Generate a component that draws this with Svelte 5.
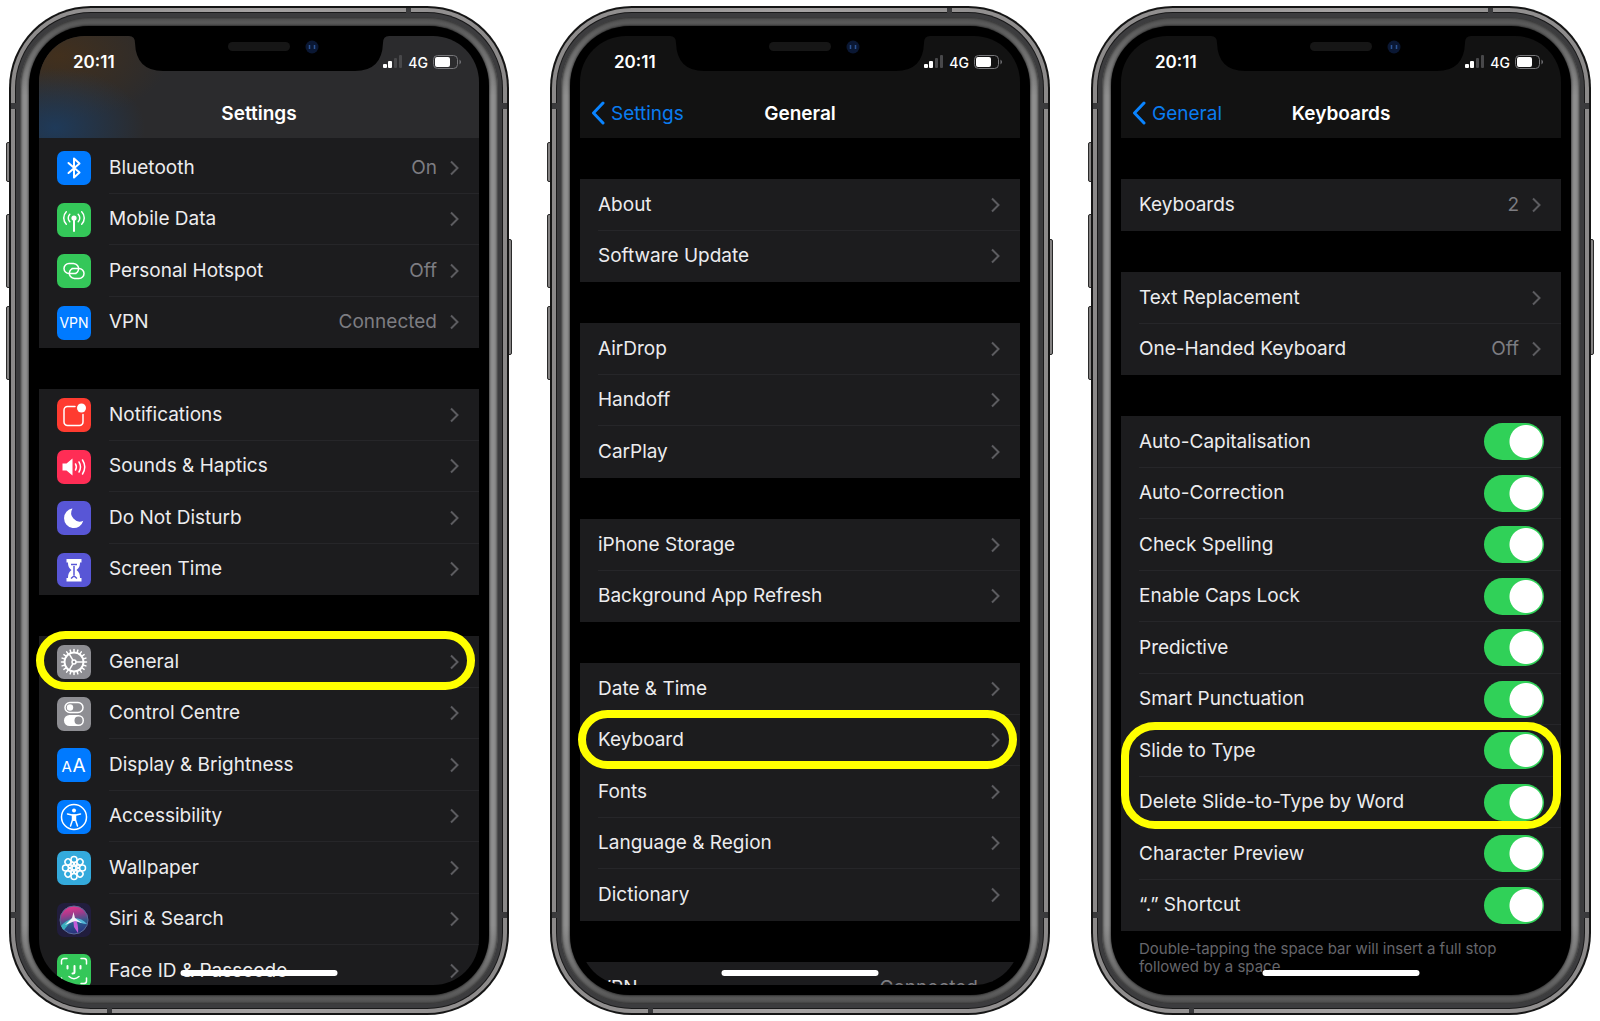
<script>
  const phones = [
    {
      title: 'Settings',
      back: '',
      tinted: true,
      groups: [
        {
          scrolled: true,
          rows: [
            { label: 'Bluetooth', icon: 'bluetooth', value: 'On' },
            { label: 'Mobile Data', icon: 'antenna' },
            { label: 'Personal Hotspot', icon: 'hotspot', value: 'Off' },
            { label: 'VPN', icon: 'vpn', value: 'Connected' },
          ],
        },
        {
          rows: [
            { label: 'Notifications', icon: 'notifications' },
            { label: 'Sounds & Haptics', icon: 'sounds' },
            { label: 'Do Not Disturb', icon: 'moon' },
            { label: 'Screen Time', icon: 'hourglass' },
          ],
        },
        {
          rows: [
            { label: 'General', icon: 'gear' },
            { label: 'Control Centre', icon: 'switches' },
            { label: 'Display & Brightness', icon: 'display' },
            { label: 'Accessibility', icon: 'accessibility' },
            { label: 'Wallpaper', icon: 'wallpaper' },
            { label: 'Siri & Search', icon: 'siri' },
            { label: 'Face ID & Passcode', icon: 'faceid' },
          ],
        },
      ],
      mark: 'mark-general',
    },
    {
      title: 'General',
      back: 'Settings',
      groups: [
        { rows: [{ label: 'About' }, { label: 'Software Update' }] },
        { rows: [{ label: 'AirDrop' }, { label: 'Handoff' }, { label: 'CarPlay' }] },
        { rows: [{ label: 'iPhone Storage' }, { label: 'Background App Refresh' }] },
        {
          rows: [
            { label: 'Date & Time' },
            { label: 'Keyboard' },
            { label: 'Fonts' },
            { label: 'Language & Region' },
            { label: 'Dictionary' },
          ],
        },
        { rows: [{ label: 'VPN', value: 'Connected' }] },
      ],
      mark: 'mark-keyboard',
    },
    {
      title: 'Keyboards',
      back: 'General',
      groups: [
        { rows: [{ label: 'Keyboards', value: '2' }] },
        { rows: [{ label: 'Text Replacement' }, { label: 'One-Handed Keyboard', value: 'Off' }] },
        {
          rows: [
            'Auto-Capitalisation',
            'Auto-Correction',
            'Check Spelling',
            'Enable Caps Lock',
            'Predictive',
            'Smart Punctuation',
            'Slide to Type',
            'Delete Slide-to-Type by Word',
            'Character Preview',
            '“.” Shortcut',
          ].map((label) => ({ label, toggle: true })),
          note: 'Double-tapping the space bar will insert a full stop followed by a space.',
        },
      ],
      mark: 'mark-slide',
    },
  ];

  const teeth = Array.from({ length: 20 }, (_, i) => i * 18);
  const petals = Array.from({ length: 8 }, (_, i) => i * 45);
</script>

{#snippet icon(name)}
  <svg class="icon {name}" viewBox="0 0 34 34" aria-hidden="true">
    {#if name === 'bluetooth'}
      <path class="line bold" d="M11.500 12l11 9.500-5.500 5V7.500l5.500 5-11 9.500" />
    {:else if name === 'antenna'}
      <circle class="solid" cx="17" cy="15" r="2.600" />
      <path class="line bold" d="M17 16v12" />
      <path class="line" d="M12.800 11.200a5.400 5.400 0 0 0 0 7.600M21.200 11.200a5.400 5.400 0 0 1 0 7.600M9.300 8.800a8.800 8.800 0 0 0 0 12.400M24.700 8.800a8.800 8.800 0 0 1 0 12.400" />
    {:else if name === 'hotspot'}
      <g class="line">
        <path d="M19 19.500h-7a5 5 0 0 1 0-10h4.500a5.500 5 0 0 1 5 6q-.5 3.500-4 4" />
        <path d="M15 14.500h7a5 5 0 0 1 0 10h-4.500a5.500 5 0 0 1-5-6q.5-3.500 4-4" />
      </g>
    {:else if name === 'vpn'}
      <text x="17" y="22" text-anchor="middle" font-size="14">VPN</text>
    {:else if name === 'notifications'}
      <path class="line" d="M18 8.500h-7.500a3.500 3.500 0 0 0-3.500 3.500v12a3.500 3.500 0 0 0 3.500 3.500h12a3.500 3.500 0 0 0 3.500-3.500v-7.500" />
      <circle class="solid" cx="24.500" cy="10" r="4.500" />
    {:else if name === 'sounds'}
      <path class="solid" d="M5.500 13.500h4l6-5v17l-6-5h-4z" />
      <path class="line" d="M18.500 14q1.800 3 0 6M22 12q3 5 0 10M25.500 10q4.500 7 0 14" />
    {:else if name === 'moon'}
      <path class="solid" d="M15.500 7.500a8.600 8.600 0 0 0 10.800 12.300 9.800 9.800 0 1 1-10.800-12.300z" />
    {:else if name === 'hourglass'}
      <path class="solid" d="M9.500 6h15v3.500h-1.500c0 4-1 5.500-3.500 7.500 2.500 2 3.500 4 3.500 8h1.500V28.500h-15V25h1.500c0-4 1-6 3.500-8-2.500-2-3.500-3.500-3.500-7.500h-1.500z" />
      <path class="cut" d="M14 11.500h6M17 13v9M14 25.500l3-2.500 3 2.500" />
    {:else if name === 'gear'}
      <g class="line">
        <circle class="ring" cx="17" cy="17" r="9.500" />
        {#each teeth as angle}
          <path d="M17 4.500v3" transform="rotate({angle} 17 17)" />
        {/each}
        <circle cx="17" cy="17" r="2" />
        <path d="M19 17h7.500M16 15.300l-3.800-6.500M16 18.700l-3.800 6.500" />
      </g>
    {:else if name === 'switches'}
      <rect class="line" x="8" y="5.500" width="18" height="10" rx="5" />
      <circle class="solid" cx="13" cy="10.500" r="3.200" />
      <rect class="solid" x="7" y="18" width="20" height="11" rx="5.500" />
      <circle class="hole" cx="21.500" cy="23.500" r="4" />
    {:else if name === 'display'}
      <text x="4.500" y="24" font-size="15">A</text>
      <text x="15.500" y="24" font-size="19">A</text>
    {:else if name === 'accessibility'}
      <circle class="line" cx="17" cy="17" r="12.500" />
      <circle class="solid" cx="17" cy="10.500" r="2" />
      <path class="line" d="M10.500 14l4.500 1h4l4.500-1M15.500 15v5l-2 6M18.500 15v5l2 6" />
      <path class="solid" d="M15 14.500h4v6.500h-4z" />
    {:else if name === 'wallpaper'}
      <g class="line">
        {#each petals as angle}
          <circle cx="17" cy="8.500" r="3" transform="rotate({angle} 17 17)" />
          <circle cx="17" cy="12.500" r="1.500" transform="rotate({angle + 22} 17 17)" />
        {/each}
        <circle cx="17" cy="17" r="2" />
      </g>
    {:else if name === 'siri'}
      <defs>
        <linearGradient id="siri-orb" x1="0.400" y1="0" x2="0.600" y2="1">
          <stop offset="0" stop-color="#e8348c" />
          <stop offset="0.300" stop-color="#9c3c8c" />
          <stop offset="0.600" stop-color="#2a5c8c" />
          <stop offset="1" stop-color="#2a2d7c" />
        </linearGradient>
      </defs>
      <circle cx="17" cy="17" r="14" fill="url(#siri-orb)" stroke="#5a6c98" />
      <path d="M16 15Q8 18 4 23q1 3 3 4 4-6 10-11z" fill="#3fc4cc" opacity="0.800" />
      <path d="M17 15q8 0 13 6-6 0-13-4z" fill="#54b8d8" />
      <path d="M16 15l1 9 4 6q1-8-3-15z" fill="#c45cd8" />
      <path d="M16.500 9l1.500 6 7 5-7-2-10 4 7-7z" fill="#fff" opacity="0.900" />
    {:else if name === 'faceid'}
      <path class="line" d="M4.500 10V7a2.500 2.500 0 0 1 2.500-2.500h3M24 4.500h3a2.500 2.500 0 0 1 2.500 2.500v3M4.500 24v3a2.500 2.500 0 0 0 2.500 2.500h3M24 29.500h3a2.500 2.500 0 0 0 2.500-2.500v-3M12 22.500q5 4.500 10 0" />
      <path class="line bold" d="M10.500 12v2.500M23.500 12v2.500M17.500 12v6q0 1.500-2 1.500" />
    {/if}
  </svg>
{/snippet}

{#snippet chevron()}
  <svg class="chevron" viewBox="0 0 9 16" aria-hidden="true"><path d="M1 1.500L7.500 8 1 14.500" /></svg>
{/snippet}

<main>
  {#each phones as phone, p}
    <section class="phone" aria-label={phone.title}>
      <span class="key silent"></span>
      <span class="key volume-up"></span>
      <span class="key volume-down"></span>
      <span class="key power"></span>
      <div class="layer edge">
        <div class="layer band">
          <div class="layer seam">
            <div class="layer rim">
              <div class="layer glass">
                <div class="screen">
                  <header class:tinted={phone.tinted}>
                    <div class="status">
                      <time>20:11</time>
                      <span class="network">
                        <svg class="bars" viewBox="0 0 20 14" aria-hidden="true">
                          <rect x="0" y="9" width="4" height="4" rx="1" />
                          <rect x="5" y="6" width="4" height="7" rx="1" />
                          <rect class="dim" x="11" y="3" width="3" height="10" rx="1" />
                          <rect class="dim" x="16" y="0" width="3" height="13" rx="1" />
                        </svg>
                        <span>4G</span>
                        <svg class="battery" viewBox="0 0 29 14" aria-hidden="true">
                          <rect class="shell" x="0.500" y="0.500" width="24" height="13" rx="4" />
                          <rect x="2" y="2" width="15" height="10" rx="2" />
                          <path class="tip" d="M26.500 4.500q3 2.500 0 5z" />
                        </svg>
                      </span>
                    </div>
                    <nav>
                      {#if phone.back}
                        <a class="back" href="#back">
                          <svg viewBox="0 0 14 24" aria-hidden="true"><path d="M12 2L2.500 12 12 22" /></svg>
                          {phone.back}
                        </a>
                      {/if}
                      <h1>{phone.title}</h1>
                    </nav>
                  </header>
                  <div class="list" class:flush={phone.tinted}>
                    {#each phone.groups as group, g}
                      <div class="group" class:scrolled={group.scrolled}>
                        {#each group.rows as row, r}
                          {#if row.toggle}
                            <label class="row" for="toggle-{p}-{g}-{r}">
                              <span class="body">
                                <span class="name">{row.label}</span>
                                <input id="toggle-{p}-{g}-{r}" type="checkbox" role="switch" checked />
                              </span>
                            </label>
                          {:else}
                            <a class="row" href="#open">
                              {#if row.icon}{@render icon(row.icon)}{/if}
                              <span class="body">
                                <span class="name">{row.label}</span>
                                {#if row.value}<span class="value">{row.value}</span>{/if}
                                {@render chevron()}
                              </span>
                            </a>
                          {/if}
                        {/each}
                      </div>
                      {#if group.note}<p class="note">{group.note}</p>{/if}
                    {/each}
                  </div>
                  <svg class="notch" viewBox="0 0 260 35" aria-hidden="true">
                    <path d="M0 0q6 0 6 7 1 28 28 28h192q27 0 28-28 0-7 6-7z" />
                    <rect x="99" y="6" width="62" height="9" rx="4.500" fill="#161616" />
                    <circle cx="183" cy="11" r="6.500" fill="#0a1733" />
                    <path d="M180.500 9v4M185.500 9v4" stroke="#2c5496" stroke-width="1.500" />
                  </svg>
                  <span class="home"></span>
                </div>
              </div>
            </div>
          </div>
        </div>
      </div>
      <span class="joint left upper"></span>
      <span class="joint right upper"></span>
      <span class="joint left lower"></span>
      <span class="joint right lower"></span>
      <span class="joint top"></span>
      <span class="joint bottom"></span>
      <span class="mark {phone.mark}"></span>
    </section>
  {/each}
</main>

<style>
  :global(body) {
    margin: 0;
    background: #fff;
  }

  main,
  main * {
    box-sizing: border-box;
  }

  main {
    display: grid;
    grid-template-columns: repeat(3, 1fr);
    align-items: start;
    gap: 41px;
    padding: 6px 9px;
    font-family: Inter, 'Liberation Sans', sans-serif;
    font-size: 19px;
    color: #ececee;
  }

  .phone {
    position: relative;
    display: flex;
    flex-direction: column;
    aspect-ratio: 500 / 1009;
    min-width: 0;
    min-height: 0;
  }

  .layer {
    display: flex;
    flex: 1;
    flex-direction: column;
    min-height: 0;
  }

  .edge {
    position: relative;
    padding: 2px;
    border-radius: 82px;
    background: #151515;
  }

  .band {
    padding: 5px;
    border-radius: 80px;
    background: linear-gradient(90deg, #8b8989, #a5a2a2 50%, #8b8989);
  }

  .seam {
    padding: 4px;
    border-radius: 75px;
    background: #3c3c3e;
    box-shadow: 0 0 0 1px #19191a;
  }

  .rim {
    padding: 9px;
    border-radius: 71px;
    background: linear-gradient(#555, #8e8e8e 8%, #8e8e8e 92%, #555);
    box-shadow: inset 0 0 3px 1px #2c2c2c;
  }

  .glass {
    padding: 10px;
    border-radius: 60px;
    background: #000;
    box-shadow: 0 0 3px #000;
  }

  .screen {
    position: relative;
    display: flex;
    flex: 1;
    flex-direction: column;
    min-height: 0;
    overflow: hidden;
    border-radius: 46px;
  }

  header {
    background: #121212;
  }

  header.tinted {
    background:
      radial-gradient(ellipse 90px 60px at 16px 90%, #1f3a59, transparent),
      radial-gradient(ellipse 110px 64px at 20px 20px, #42301d, transparent),
      #2b2b2d;
  }

  .status {
    display: flex;
    align-items: center;
    justify-content: space-between;
    height: 52px;
    padding: 0 17px 0 34px;
    color: #fff;
  }

  time {
    font-size: 17px;
    font-weight: 600;
  }

  .network {
    display: flex;
    align-items: center;
    gap: 5px;
    font-size: 14px;
    font-weight: 500;
  }

  .network svg {
    height: 14px;
    fill: #fff;
  }

  .bars {
    width: 20px;
  }

  .bars .dim {
    fill: #48484a;
  }

  .battery {
    width: 29px;
  }

  .battery .shell {
    fill: none;
    stroke: #77777a;
  }

  .battery .tip {
    fill: #77777a;
  }

  nav {
    display: grid;
    grid-template-columns: 1fr auto 1fr;
    align-items: center;
    height: 50px;
    padding: 0 11px;
  }

  h1 {
    grid-column: 2;
    margin: 0;
    font-size: 19px;
    font-weight: 600;
    color: #fff;
  }

  .back {
    display: flex;
    align-items: center;
    gap: 6px;
    color: #0a7cf0;
    text-decoration: none;
  }

  .back svg {
    width: 14px;
    height: 24px;
    fill: none;
    stroke: #0a84ff;
    stroke-width: 3;
    stroke-linecap: round;
    stroke-linejoin: round;
  }

  .list {
    display: flex;
    flex: 1;
    flex-direction: column;
    min-height: 0;
    padding-top: 41px;
    overflow: hidden;
    background: #000;
  }

  .list.flush {
    padding-top: 0;
  }

  .group {
    flex: none;
    background: #1c1c1e;
  }

  .group + .group {
    margin-top: 41px;
  }

  .group.scrolled {
    padding-top: 4px;
  }

  .row {
    display: flex;
    align-items: center;
    gap: 18px;
    height: 52px;
    padding-left: 18px;
    color: inherit;
    text-decoration: none;
  }

  .row:nth-child(even) {
    height: 51px;
  }

  .body {
    display: flex;
    flex: 1;
    align-items: center;
    align-self: stretch;
    gap: 13px;
    min-width: 0;
    padding-right: 20px;
    border-bottom: 1px solid #262629;
  }

  .row:last-child .body {
    border-bottom-color: transparent;
  }

  label .body {
    padding-right: 17px;
  }

  .name {
    flex: 1;
    line-height: 24px;
    white-space: nowrap;
  }

  .value {
    line-height: 24px;
    color: #7d7d82;
  }

  .chevron {
    width: 9px;
    height: 16px;
    fill: none;
    stroke: #5c5c60;
    stroke-width: 2;
  }

  input {
    appearance: none;
    width: 60px;
    height: 37px;
    margin: 0;
    border-radius: 19px;
    background: radial-gradient(circle at 42px 50%, #fff 16px, #30d158 17px);
  }

  input:not(:checked) {
    background: radial-gradient(circle at 18px 50%, #fff 16px, #39393d 17px);
  }

  .note {
    margin: 0;
    padding: 9px 36px 0 18px;
    font-size: 15px;
    line-height: 18px;
    color: #66666b;
  }

  .icon {
    flex: none;
    width: 34px;
    height: 34px;
    border-radius: 7px;
    background: #007aff;
  }

  .icon text {
    fill: #fff;
    font-weight: 400;
  }

  .antenna,
  .hotspot,
  .faceid {
    background: #34c759;
  }

  .notifications {
    background: #ff3b30;
  }

  .sounds {
    background: #ff2d55;
  }

  .moon,
  .hourglass {
    background: #5856d6;
  }

  .gear,
  .switches {
    background: #8e8e93;
  }

  .wallpaper {
    background: #34aadc;
  }

  .siri {
    background: #211d3d;
  }

  .line {
    fill: none;
    stroke: #fff;
    stroke-width: 1.5;
    stroke-linecap: round;
    stroke-linejoin: round;
  }

  .bold,
  .ring {
    stroke-width: 2;
  }

  .solid {
    fill: #fff;
  }

  .hole {
    fill: #8e8e93;
  }

  .cut {
    fill: none;
    stroke: #5856d6;
    stroke-width: 1.5;
  }

  .notch {
    position: absolute;
    top: 0;
    left: 50%;
    width: 260px;
    height: 35px;
    transform: translateX(-50%);
  }

  .home {
    position: absolute;
    bottom: 9px;
    left: 50%;
    width: 157px;
    height: 6px;
    border-radius: 3px;
    background: #fff;
    transform: translateX(-50%);
  }

  .key {
    position: absolute;
    left: -3px;
    width: 6px;
    border: 1px solid #2a2a2a;
    border-radius: 2px;
    background: #858383;
  }

  .silent {
    top: 136px;
    height: 40px;
  }

  .volume-up {
    top: 208px;
    height: 74px;
  }

  .volume-down {
    top: 300px;
    height: 74px;
  }

  .power {
    top: 233px;
    right: -3px;
    left: auto;
    height: 116px;
  }

  .joint {
    position: absolute;
    width: 5px;
    height: 6px;
    background: #3a3a3c;
  }

  .joint.left {
    left: 2px;
  }

  .joint.right {
    right: 2px;
  }

  .joint.upper {
    top: 97px;
  }

  .joint.lower {
    bottom: 97px;
  }

  .joint.top {
    top: 2px;
    right: 98px;
  }

  .joint.bottom {
    bottom: 2px;
    left: 98px;
  }

  .mark {
    position: absolute;
    right: 33px;
    left: 28px;
    height: 59px;
    border: 8px solid #ff0;
    border-radius: 34px;
    pointer-events: none;
  }

  .mark-general {
    top: 625px;
    right: 34px;
    left: 27px;
  }

  .mark-keyboard {
    top: 704px;
  }

  .mark-slide {
    top: 716px;
    right: 30px;
    left: 30px;
    height: 107px;
  }
</style>
